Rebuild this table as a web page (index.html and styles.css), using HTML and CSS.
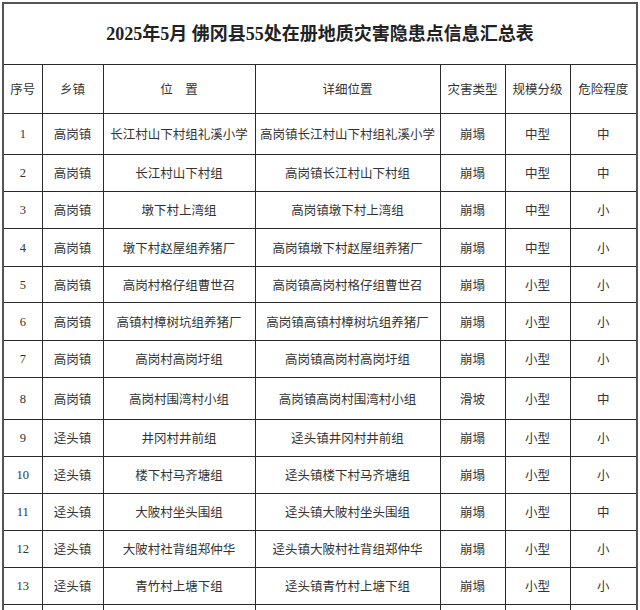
FILE: index.html
```html
<!DOCTYPE html>
<html lang="zh-CN">
<head>
<meta charset="utf-8">
<link rel="stylesheet" href="styles.css">
</head>
<body>
<div class="sheet">
<table class="tbl">
  <colgroup>
    <col class="c1"><col class="c2"><col class="c3"><col class="c4"><col class="c5"><col class="c6"><col class="c7">
  </colgroup>
  <tr class="title-row"><td colspan="7" class="title">2025年5月 佛冈县55处在册地质灾害隐患点信息汇总表</td></tr>
  <tr class="head-row">
    <td>序号</td><td>乡镇</td><td>位&emsp;置</td><td>详细位置</td><td>灾害类型</td><td>规模分级</td><td>危险程度</td>
  </tr>
  <tr class="r-tall"><td class="num">1</td><td>高岗镇</td><td>长江村山下村组礼溪小学</td><td>高岗镇长江村山下村组礼溪小学</td><td>崩塌</td><td>中型</td><td>中</td></tr>
  <tr><td class="num">2</td><td>高岗镇</td><td>长江村山下村组</td><td>高岗镇长江村山下村组</td><td>崩塌</td><td>中型</td><td>中</td></tr>
  <tr><td class="num">3</td><td>高岗镇</td><td>墩下村上湾组</td><td>高岗镇墩下村上湾组</td><td>崩塌</td><td>中型</td><td>小</td></tr>
  <tr class="r38"><td class="num">4</td><td>高岗镇</td><td>墩下村赵屋组养猪厂</td><td>高岗镇墩下村赵屋组养猪厂</td><td>崩塌</td><td>中型</td><td>小</td></tr>
  <tr class="r36"><td class="num">5</td><td>高岗镇</td><td>高岗村格仔组曹世召</td><td>高岗镇高岗村格仔组曹世召</td><td>崩塌</td><td>小型</td><td>小</td></tr>
  <tr class="r38"><td class="num">6</td><td>高岗镇</td><td>高镇村樟树坑组养猪厂</td><td>高岗镇高镇村樟树坑组养猪厂</td><td>崩塌</td><td>小型</td><td>小</td></tr>
  <tr><td class="num">7</td><td>高岗镇</td><td>高岗村高岗圩组</td><td>高岗镇高岗村高岗圩组</td><td>崩塌</td><td>小型</td><td>小</td></tr>
  <tr class="r-tall2"><td class="num">8</td><td>高岗镇</td><td>高岗村围湾村小组</td><td>高岗镇高岗村围湾村小组</td><td>滑坡</td><td>小型</td><td>中</td></tr>
  <tr><td class="num">9</td><td>迳头镇</td><td>井冈村井前组</td><td>迳头镇井冈村井前组</td><td>崩塌</td><td>小型</td><td>小</td></tr>
  <tr><td class="num">10</td><td>迳头镇</td><td>楼下村马齐塘组</td><td>迳头镇楼下村马齐塘组</td><td>崩塌</td><td>小型</td><td>小</td></tr>
  <tr><td class="num">11</td><td>迳头镇</td><td>大陂村坐头围组</td><td>迳头镇大陂村坐头围组</td><td>崩塌</td><td>小型</td><td>中</td></tr>
  <tr><td class="num">12</td><td>迳头镇</td><td>大陂村社背组郑仲华</td><td>迳头镇大陂村社背组郑仲华</td><td>崩塌</td><td>小型</td><td>小</td></tr>
  <tr><td class="num">13</td><td>迳头镇</td><td>青竹村上塘下组</td><td>迳头镇青竹村上塘下组</td><td>崩塌</td><td>小型</td><td>小</td></tr>
  <tr><td class="num"></td><td></td><td></td><td></td><td></td><td></td><td></td></tr>
</table>
</div>
</body>
</html>
```
FILE: styles.css
```css
html, body {
  margin: 0;
  padding: 0;
  background: #ffffff;
  overflow: hidden;
}
body {
  width: 640px;
  height: 610px;
  font-family: "Noto Sans CJK SC", "Noto Sans", sans-serif;
  color: #333333;
}
.sheet {
  padding: 2px 0 0 2px;
}
.tbl {
  border-collapse: collapse;
  table-layout: fixed;
  width: 635px;
  border: 2px solid #555555;
}
.c1 { width: 39px; }
.c2 { width: 61px; }
.c3 { width: 152px; }
.c4 { width: 185px; }
.c5 { width: 65px; }
.c6 { width: 65px; }
.c7 { width: 67px; }
.tbl td {
  border: 1px solid #2a2a2a;
  padding: 0;
  text-align: center;
  vertical-align: middle;
  font-size: 12.5px;
  line-height: 14px;
  height: 36px;
  white-space: nowrap;
  overflow: hidden;
}
.title-row td.title {
  height: 60px;
  font-family: "Liberation Serif", "Noto Sans CJK SC", serif;
  font-weight: bold;
  font-size: 18px;
  color: #222222;
}
.head-row td {
  height: 48px;
  color: #333333;
}
.r-tall td { height: 40px; }
.r-tall2 td { height: 41px; }
.r38 td { height: 37px; }
.r36 td { height: 35px; }
.tbl td.num {
  font-family: "Liberation Serif", serif;
  font-size: 12.5px;
  color: #333333;
}
```
